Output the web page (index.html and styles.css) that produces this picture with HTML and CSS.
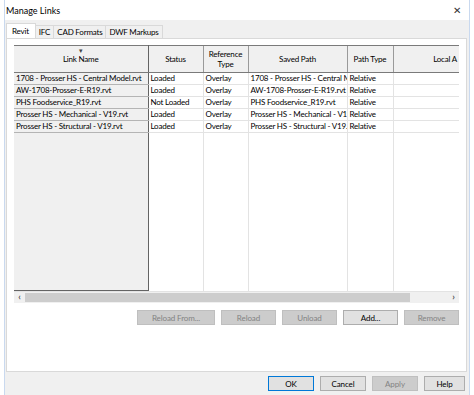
FILE: index.html
```html
<!DOCTYPE html>
<html lang="en">
<head>
  <meta charset="UTF-8">
  <title>Manage Links</title>
  <link rel="stylesheet" href="styles.css">
</head>
<body>
  <div class="window">
    <div class="titlebar">
      <span class="title">Manage Links</span>
      <span class="close">✕</span>
    </div>
    <div class="body">
      <div class="tabs">
        <div class="tab active">Revit</div>
        <div class="tab">IFC</div>
        <div class="tab">CAD Formats</div>
        <div class="tab">DWF Markups</div>
      </div>
      <div class="panel">
        <div class="grid">
          <table>
            <colgroup>
              <col class="c-name"><col class="c-status"><col class="c-type"><col class="c-path"><col class="c-ptype"><col class="c-local">
            </colgroup>
            <thead>
              <tr>
                <th class="name"><span class="sort">▾</span>Link Name</th>
                <th>Status</th>
                <th>Reference<br>Type</th>
                <th>Saved Path</th>
                <th>Path Type</th>
                <th class="local">Local A</th>
              </tr>
            </thead>
            <tbody>
              <tr><td class="name">1708 - Prosser HS - Central Model.rvt</td><td>Loaded</td><td>Overlay</td><td>1708 - Prosser HS - Central Model.rvt</td><td>Relative</td><td></td></tr>
              <tr><td class="name">AW-1708-Prosser-E-R19.rvt</td><td>Loaded</td><td>Overlay</td><td>AW-1708-Prosser-E-R19.rvt</td><td>Relative</td><td></td></tr>
              <tr><td class="name">PHS Foodservice_R19.rvt</td><td>Not Loaded</td><td>Overlay</td><td>PHS Foodservice_R19.rvt</td><td>Relative</td><td></td></tr>
              <tr><td class="name">Prosser HS - Mechanical - V19.rvt</td><td>Loaded</td><td>Overlay</td><td>Prosser HS - Mechanical - V19.rvt</td><td>Relative</td><td></td></tr>
              <tr><td class="name">Prosser HS - Structural - V19.rvt</td><td>Loaded</td><td>Overlay</td><td>Prosser HS - Structural - V19.rvt</td><td>Relative</td><td></td></tr>
              <tr class="filler"><td class="name"></td><td></td><td></td><td></td><td></td><td></td></tr>
            </tbody>
          </table>
          <div class="hscroll">
            <span class="arrow">‹</span>
            <span class="thumb"></span>
            <span class="track"></span>
            <span class="arrow">›</span>
          </div>
        </div>
        <div class="actions">
          <button class="btn off wide">Reload From...</button>
          <button class="btn off">Reload</button>
          <button class="btn off">Unload</button>
          <button class="btn">Add...</button>
          <button class="btn off">Remove</button>
        </div>
      </div>
      <div class="footer">
        <button class="btn ok">OK</button>
        <button class="btn">Cancel</button>
        <button class="btn off">Apply</button>
        <button class="btn help">Help</button>
      </div>
    </div>
  </div>
</body>
</html>
```

FILE: styles.css
```css
body {
  margin: 0;
  background: #ffffff;
  font-family: Lato, 'Open Sans', sans-serif;
  font-size: 8px;
  color: #000000;
}
.window {
  margin-left: 4px;
  width: 464px;
  height: 395px;
  border-left: 1px solid #c9d9ef;
  border-right: 1px solid #c9d9ef;
  display: flex;
  flex-direction: column;
}
.titlebar {
  height: 20px;
  display: flex;
  align-items: center;
  justify-content: space-between;
  padding: 0 8px 0 1px;
  background: #ffffff;
}
.title {
  font-size: 9px;
}
.close {
  font-size: 10px;
  color: #333333;
}
.body {
  flex: 1;
  background: #f0f0f0;
  display: flex;
  flex-direction: column;
  padding: 4px 2px 0 1px;
}
.tabs {
  display: flex;
  height: 14px;
  align-items: flex-end;
  letter-spacing: -0.2px;
}
.tab {
  height: 12px;
  line-height: 12px;
  padding: 0 3px;
  border: 1px solid #d9d9d9;
  border-bottom: none;
  margin-left: -1px;
  background: #f0f0f0;
  white-space: nowrap;
}
.tab:first-child {
  margin-left: 0;
}
.tab.active {
  height: 14px;
  line-height: 14px;
  background: #ffffff;
  padding: 0 6px 0 5px;
  position: relative;
  z-index: 1;
}
.panel {
  height: 334px;
  background: #ffffff;
  border: 1px solid #d9d9d9;
  padding: 6px 7px 0 7px;
  box-sizing: border-box;
}
.grid {
  width: 445px;
}
table {
  width: 445px;
  table-layout: fixed;
  border-collapse: collapse;
  letter-spacing: -0.2px;
}
.c-name { width: 134px; }
.c-status { width: 55px; }
.c-type { width: 45px; }
.c-path { width: 99px; }
.c-ptype { width: 46px; }
.c-local { width: 66px; }
th {
  height: 26px;
  background: #f0f0f0;
  border-top: 1px solid #7a7a7a;
  border-bottom: 1px solid #7a7a7a;
  border-left: 1px solid #9a9a9a;
  font-weight: normal;
  line-height: 10px;
  padding: 0;
  text-align: center;
}
th:first-child {
  border-left: none;
}
th.name {
  border-right: 1px solid #646464;
  position: relative;
}
.sort {
  position: absolute;
  top: 1px;
  left: 0;
  right: 0;
  font-size: 7px;
  line-height: 6px;
  color: #444444;
}
th.local {
  text-align: right;
  padding-right: 2px;
}
td {
  height: 11px;
  line-height: 11px;
  padding: 0 2px;
  border-bottom: 1px solid #e3e3e3;
  border-left: 1px solid #e3e3e3;
  white-space: nowrap;
  overflow: hidden;
  text-overflow: clip;
}
td.name {
  background: #f0f0f0;
  border-left: none;
  border-right: 1px solid #646464;
  border-bottom: 1px solid #b4b4b4;
}
.filler td {
  height: 157px;
  border-bottom: none;
}
.filler td.name {
  border-bottom: 1px solid #646464;
}
.hscroll {
  display: flex;
  height: 11px;
  background: #f0f0f0;
  border-top: 1px solid #e3e3e3;
}
.arrow {
  width: 11px;
  line-height: 10px;
  text-align: center;
  font-size: 9px;
  font-weight: bold;
  color: #505050;
}
.thumb {
  width: 385px;
  background: #cdcdcd;
  margin: 1px 0;
}
.track {
  flex: 1;
}
.actions {
  display: flex;
  justify-content: flex-end;
  gap: 6px;
  margin-top: 7px;
}
.btn {
  height: 15px;
  width: 55px;
  padding: 0;
  font-family: Lato, 'Open Sans', sans-serif;
  font-size: 8px;
  letter-spacing: -0.1px;
  background: #e1e1e1;
  border: 1px solid #adadad;
  color: #000000;
}
.btn.off {
  background: #cccccc;
  border-color: #bfbfbf;
  color: #838383;
}
.btn.wide {
  width: 78px;
}
.footer {
  display: flex;
  justify-content: flex-end;
  gap: 6px;
  padding: 4px 2px 0 0;
}
.footer .btn {
  width: 46px;
}
.footer .btn.help {
  width: 41px;
}
.btn.ok {
  border-color: #0078d7;
}
```
